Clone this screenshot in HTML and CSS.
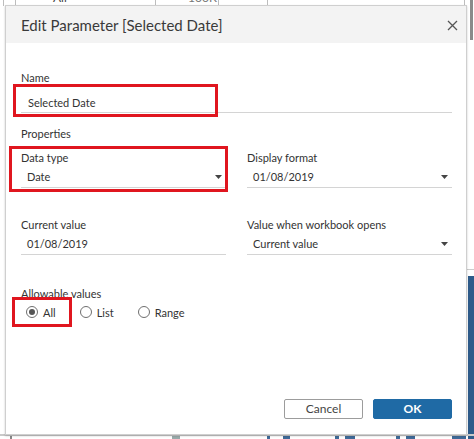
FILE: index.html
```html
<!DOCTYPE html>
<html>
<head>
<meta charset="utf-8">
<link rel="stylesheet" href="styles.css">
</head>
<body>
<div class="stage">
  <div class="bg">
    <div class="bg-top">
      <span class="vl" style="left:3px"></span>
      <span class="vl" style="left:15px"></span>
      <span class="vl" style="left:155px"></span>
      <span class="vl" style="left:218px"></span>
      <span class="vl" style="left:267px"></span>
      <span class="vl" style="left:464px"></span>
      <span class="bg-txt bg-all">All</span>
      <span class="bg-txt bg-k">100K</span>
    </div>
    <div class="bg-scroll"></div>
    <div class="bg-hline"></div>
    <div class="bg-bluebar"></div>
    <div class="bg-bottom">
      <span class="bb" style="left:10px;width:2px;background:#888"></span>
      <span class="bb" style="left:172px;width:8px;background:#9aa"></span>
      <span class="bb" style="left:267px;width:3px"></span>
      <span class="bb" style="left:283px;width:7px"></span>
      <span class="bb" style="left:335px;width:4px"></span>
      <span class="bb" style="left:345px;width:10px"></span>
      <span class="bb" style="left:396px;width:4px"></span>
      <span class="bb" style="left:406px;width:9px"></span>
      <span class="bb" style="left:452px;width:14px"></span>
    </div>
  </div>

  <div class="dialog">
    <div class="dlg-head">
      <span class="dlg-title">Edit Parameter [Selected Date]</span>
      <svg class="close" width="11" height="11" viewBox="0 0 11 11"><path d="M1 1L10 10M10 1L1 10" stroke="#555" stroke-width="1.3" fill="none"/></svg>
    </div>
    <div class="dlg-body">
      <div class="label">Name</div>
      <div class="name-input">Selected Date</div>
      <div class="section">Properties</div>
      <div class="grid">
        <div class="field">
          <div class="label">Data type</div>
          <div class="control">Date<svg class="arrow" width="7" height="4" viewBox="0 0 7 4"><path d="M0 0H7L3.5 4Z" fill="#444"/></svg></div>
        </div>
        <div class="field">
          <div class="label">Display format</div>
          <div class="control">01/08/2019<svg class="arrow" width="7" height="4" viewBox="0 0 7 4"><path d="M0 0H7L3.5 4Z" fill="#444"/></svg></div>
        </div>
        <div class="field">
          <div class="label">Current value</div>
          <div class="control">01/08/2019</div>
        </div>
        <div class="field">
          <div class="label">Value when workbook opens</div>
          <div class="control">Current value<svg class="arrow" width="7" height="4" viewBox="0 0 7 4"><path d="M0 0H7L3.5 4Z" fill="#444"/></svg></div>
        </div>
      </div>
      <div class="section allow">Allowable values</div>
      <div class="radios">
        <span class="radio on"><span class="circle"></span>All</span>
        <span class="radio"><span class="circle"></span>List</span>
        <span class="radio"><span class="circle"></span>Range</span>
      </div>
    </div>
    <div class="dlg-foot">
      <button class="btn cancel">Cancel</button>
      <button class="btn ok">OK</button>
    </div>
    <span class="mark mark-name"></span>
    <span class="mark mark-type"></span>
    <span class="mark mark-all"></span>
  </div>
</div>
</body>
</html>
```

FILE: styles.css
```css
html, body {
  margin: 0;
  padding: 0;
}
body {
  font-family: Lato, "Open Sans", "Liberation Sans", sans-serif;
  color: #333;
}
.stage {
  position: relative;
  width: 474px;
  height: 439px;
  overflow: hidden;
  background: #fff;
}
.bg {
  position: absolute;
  inset: 0;
}
.bg-top {
  position: absolute;
  left: 0;
  top: 0;
  width: 474px;
  height: 6px;
}
.vl {
  position: absolute;
  top: 0;
  width: 1px;
  height: 6px;
  background: #bdbdbd;
}
.bg-txt {
  position: absolute;
  top: -9px;
  font-size: 12px;
  line-height: 14px;
  color: #444;
}
.bg-all { left: 53px; }
.bg-k { left: 188px; color: #777; }
.bg-scroll {
  position: absolute;
  left: 470px;
  top: 0;
  width: 3px;
  height: 40px;
  background: #8a8a8a;
}
.bg-hline {
  position: absolute;
  left: 467px;
  top: 269px;
  width: 7px;
  height: 1px;
  background: #ccc;
}
.bg-bluebar {
  position: absolute;
  left: 468px;
  top: 276px;
  width: 6px;
  height: 163px;
  background: #2e5b8a;
}
.bg-bottom {
  position: absolute;
  left: 0;
  top: 434px;
  width: 474px;
  height: 5px;
  border-top: 2px solid #c9c9c9;
  box-sizing: border-box;
}
.bb {
  position: absolute;
  top: 0;
  height: 3px;
  background: #3f6a98;
}

.dialog {
  position: absolute;
  left: 5px;
  top: 5px;
  width: 462px;
  height: 430px;
  box-sizing: border-box;
  border: 1px solid #cfcfcf;
  background: #fff;
  display: flex;
  flex-direction: column;
  box-shadow: 0 1px 2px rgba(0,0,0,0.2);
}
.dlg-head {
  height: 37px;
  flex: none;
  background: #f3f3f3;
  display: flex;
  align-items: center;
  justify-content: space-between;
  padding: 1px 8px 0 15px;
  box-sizing: border-box;
}
.dlg-title {
  font-size: 15px;
  color: #3a3a3a;
}
.dlg-body {
  padding: 28px 14px 0 15px;
}
.label {
  font-size: 11px;
  line-height: 14px;
  color: #333;
}
.name-input {
  height: 28px;
  box-sizing: border-box;
  padding: 8px 0 0 7px;
  line-height: 19px;
  font-size: 11px;
  border-bottom: 1px solid #d4d4d4;
}
.section {
  margin-top: 14px;
  font-size: 11px;
  line-height: 14px;
}
.grid {
  margin-top: 10px;
  display: grid;
  grid-template-columns: 205px 205px;
  column-gap: 21px;
  row-gap: 30px;
}
.control {
  height: 23px;
  box-sizing: border-box;
  padding: 2px 4px 0 6px;
  line-height: 20px;
  font-size: 11px;
  border-bottom: 1px solid #d4d4d4;
  display: flex;
  justify-content: space-between;
  align-items: center;
}
.arrow {
  flex: none;
}
.section.allow {
  margin-top: 32px;
}
.radios {
  margin-top: 3px;
  height: 16px;
  display: flex;
  align-items: center;
  gap: 24px;
  padding-left: 5px;
  font-size: 11px;
}
.radio {
  display: flex;
  align-items: center;
  gap: 5px;
}
.circle {
  width: 12px;
  height: 12px;
  box-sizing: border-box;
  border: 1px solid #6f6f6f;
  border-radius: 50%;
  display: flex;
  align-items: center;
  justify-content: center;
}
.radio.on .circle::after {
  content: "";
  width: 6px;
  height: 6px;
  border-radius: 50%;
  background: #555;
}
.dlg-foot {
  margin-top: auto;
  display: flex;
  justify-content: flex-end;
  gap: 10px;
  padding: 0 14px 15px 0;
}
.btn {
  width: 79px;
  height: 20px;
  box-sizing: border-box;
  border-radius: 2px;
  font-family: inherit;
  font-size: 12px;
  padding: 0;
  line-height: 18px;
}
.cancel {
  background: #fff;
  border: 1px solid #9c9c9c;
  color: #444;
}
.ok {
  background: #1f6aa5;
  border: 1px solid #1f6aa5;
  color: #fff;
  font-weight: bold;
}
.mark {
  position: absolute;
  box-sizing: border-box;
  border: 3px solid #e0161f;
}
.mark-name {
  left: 7px;
  top: 78px;
  width: 205px;
  height: 33px;
}
.mark-type {
  left: 3px;
  top: 140px;
  width: 219px;
  height: 46px;
}
.mark-all {
  left: 6px;
  top: 291px;
  width: 60px;
  height: 30px;
}
```
